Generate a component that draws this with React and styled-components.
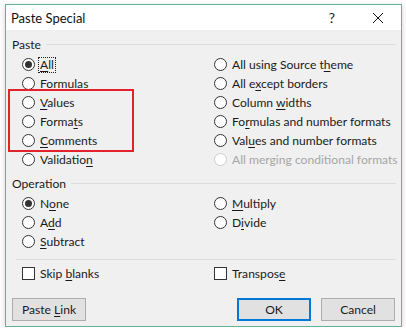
import React from 'react';
import styled, { createGlobalStyle } from 'styled-components';

const Global = createGlobalStyle`
  html, body {
    margin: 0;
    padding: 0;
    background: #ffffff;
  }
  body {
    font-family: Lato, "Noto Sans", sans-serif;
    font-size: 12.1px;
    color: #1a1a1a;
  }
`;

const Page = styled.div`
  padding: 4px 4px 0 5px;
`;

const Dialog = styled.div`
  width: 395px;
  height: 321px;
  border: 1px solid #62b29b;
  box-shadow: 0 2px 6px rgba(0, 0, 0, 0.18);
  background: #f0f0f0;
  display: flex;
  flex-direction: column;
  overflow: hidden;
`;

const TitleBar = styled.div`
  height: 25px;
  background: #ffffff;
  display: flex;
  align-items: center;
  padding-left: 5px;
  font-size: 13px;
  color: #111;
`;

const Title = styled.div`
  flex: 1;
`;

const TitleButton = styled.div`
  width: 46px;
  display: flex;
  justify-content: center;
  align-items: center;
  font-size: 14px;
  color: #222;
`;

const Body = styled.div`
  flex: 1;
  display: flex;
  flex-direction: column;
  padding: 7px 5px 4px 6px;
`;

const Group = styled.div`
  position: relative;
`;

const Legend = styled.div`
  display: flex;
  align-items: center;
  height: 14px;
  gap: 5px;
  margin-bottom: 4px;
  &::after {
    content: '';
    flex: 1;
    height: 1px;
    background: #dcdcdc;
  }
`;

const Grid = styled.div`
  display: grid;
  grid-template-columns: 192px 1fr;
  grid-auto-flow: column;
  grid-template-rows: ${p => `repeat(${p.$rows}, 19px)`};
  padding-left: 10px;
`;

const Option = styled.div`
  display: flex;
  align-items: center;
  gap: 4px;
  white-space: nowrap;
  color: ${p => (p.$disabled ? '#a6a6a6' : '#1a1a1a')};
`;

const RadioCircle = styled.span`
  width: 11px;
  height: 11px;
  border-radius: 50%;
  border: 1px solid ${p => (p.$disabled ? '#cccccc' : '#333333')};
  background: #ffffff;
  display: flex;
  justify-content: center;
  align-items: center;
  flex-shrink: 0;
  &::after {
    content: '';
    display: ${p => (p.$checked ? 'block' : 'none')};
    width: 7px;
    height: 7px;
    border-radius: 50%;
    background: #333333;
  }
`;

const CheckBox = styled.span`
  width: 11px;
  height: 11px;
  border: 1px solid #333333;
  background: #ffffff;
  flex-shrink: 0;
`;

const Label = styled.span`
  outline: ${p => (p.$focus ? '1px dotted #222' : 'none')};
  outline-offset: 0;
  line-height: 14px;
  padding: 0 1px;
`;

const U = styled.span`
  text-decoration: underline;
  text-underline-offset: 2px;
`;

const Highlight = styled.div`
  position: absolute;
  left: -4px;
  top: 52px;
  width: 122px;
  height: 59px;
  border: 2px solid #e3222b;
  pointer-events: none;
`;

const Section = styled.div`
  margin-top: 7px;
`;

const Separator = styled.div`
  height: 1px;
  background: #dcdcdc;
  margin: 8px 0 4px 4px;
`;

const Buttons = styled.div`
  display: flex;
  align-items: center;
  margin-top: 15px;
`;

const Button = styled.div`
  width: 72px;
  height: 21px;
  background: #e1e1e1;
  border: 1px solid #adadad;
  display: flex;
  justify-content: center;
  align-items: center;
  white-space: nowrap;
  margin-left: ${p => p.$ml || 0}px;
  ${p => p.$primary && `
    border: 2px solid #0078d7;
    width: 70px;
    height: 19px;
  `}
`;

const Radio = ({ checked, disabled, focus, children }) => (
  <Option $disabled={disabled}>
    <RadioCircle $checked={checked} $disabled={disabled} />
    <Label $focus={focus}>{children}</Label>
  </Option>
);

const Check = ({ children }) => (
  <Option>
    <CheckBox />
    <Label>{children}</Label>
  </Option>
);

export default function App() {
  return (
    <>
      <Global />
      <Page>
        <Dialog>
          <TitleBar>
            <Title>Paste Special</Title>
            <TitleButton>?</TitleButton>
            <TitleButton>
              <svg width="12" height="12" viewBox="0 0 12 12">
                <path d="M1 1 L11 11 M11 1 L1 11" stroke="#111" strokeWidth="1" />
              </svg>
            </TitleButton>
          </TitleBar>
          <Body>
            <Group>
              <Legend>Paste</Legend>
              <Grid $rows={6}>
                <Radio checked focus><U>A</U>ll</Radio>
                <Radio>Formulas</Radio>
                <Radio><U>V</U>alues</Radio>
                <Radio>Forma<U>t</U>s</Radio>
                <Radio><U>C</U>omments</Radio>
                <Radio>Validatio<U>n</U></Radio>
                <Radio>All using Source t<U>h</U>eme</Radio>
                <Radio>All e<U>x</U>cept borders</Radio>
                <Radio>Column <U>w</U>idths</Radio>
                <Radio>Fo<U>r</U>mulas and number formats</Radio>
                <Radio>Val<U>u</U>es and number formats</Radio>
                <Radio disabled>All merging conditional formats</Radio>
              </Grid>
              <Highlight />
            </Group>
            <Section>
              <Legend>Operation</Legend>
              <Grid $rows={3}>
                <Radio checked>N<U>o</U>ne</Radio>
                <Radio>A<U>d</U>d</Radio>
                <Radio><U>S</U>ubtract</Radio>
                <Radio><U>M</U>ultiply</Radio>
                <Radio>D<U>i</U>vide</Radio>
              </Grid>
            </Section>
            <Separator />
            <Grid $rows={1}>
              <Check>Skip <U>b</U>lanks</Check>
              <Check>Transpos<U>e</U></Check>
            </Grid>
            <Buttons>
              <Button><span>Paste <U>L</U>ink</span></Button>
              <Button $primary $ml={151}>OK</Button>
              <Button $ml={10}>Cancel</Button>
            </Buttons>
          </Body>
        </Dialog>
      </Page>
    </>
  );
}
